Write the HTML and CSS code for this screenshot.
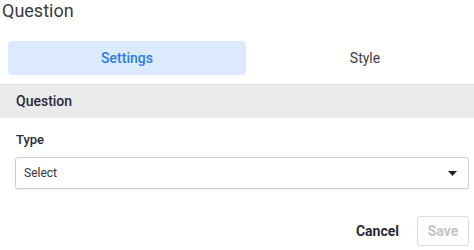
FILE: index.html
```html
<!DOCTYPE html>
<html lang="en">
<head>
    <meta charset="UTF-8">
    <meta name="viewport" content="width=device-width, initial-scale=1.0">
    <title>Question</title>
    <link rel="stylesheet" href="styles.css">
</head>
<body>
    <div class="panel">
        <h1 class="panel-title">Question</h1>
        <div class="tabs">
            <button class="tab active">Settings</button>
            <button class="tab">Style</button>
        </div>
        <div class="section-header">Question</div>
        <div class="form-body">
            <div class="form-group">
                <label for="type">Type</label>
                <div class="select-wrap">
                    <select id="type">
                        <option>Select</option>
                    </select>
                    <svg class="caret" width="9" height="5" viewBox="0 0 9 5"><path d="M0 0h9L4.5 5z" fill="#222"/></svg>
                </div>
            </div>
            <div class="actions">
                <button class="btn btn-cancel">Cancel</button>
                <button class="btn btn-save" disabled>Save</button>
            </div>
        </div>
    </div>
</body>
</html>
```

FILE: styles.css
```css
body {
    margin: 0;
    font-family: Roboto, "Liberation Sans", Arial, sans-serif;
    background-color: #fff;
    color: #2c2c3a;
}
.panel {
    width: 474px;
    height: 250px;
    overflow: hidden;
}
.panel-title {
    margin: 0;
    padding-left: 2px;
    font-size: 18px;
    line-height: 21px;
    font-weight: 400;
    color: #3a3a44;
}
.tabs {
    display: grid;
    grid-template-columns: 238px 238px;
    margin: 20px 0 0 8px;
}
.tab {
    height: 34px;
    border: none;
    background: none;
    font-family: inherit;
    font-size: 14px;
    color: #3d3d48;
    border-radius: 4px;
    cursor: pointer;
}
.tab.active {
    background-color: #dbeafd;
    color: #2b7de3;
    font-weight: 500;
}
.section-header {
    margin-top: 9px;
    height: 33px;
    line-height: 33px;
    padding-left: 16px;
    background-color: #ebebeb;
    border-top: 1px solid #dcdcdc;
    font-size: 14px;
    font-weight: 500;
    color: #2a2a38;
}
.form-body {
    padding: 14px 5px 0 15px;
}
.form-group label {
    display: block;
    padding-left: 1px;
    font-size: 13px;
    line-height: 16px;
    font-weight: 500;
    color: #2a2a38;
}
.select-wrap {
    position: relative;
    margin-top: 9px;
}
.select-wrap select {
    display: block;
    width: 100%;
    height: 32px;
    padding: 0 8px;
    border: 1px solid #cfcfcf;
    border-radius: 3px;
    background: #fff;
    box-shadow: 0 1px 2px rgba(0, 0, 0, 0.08);
    font-family: inherit;
    font-size: 12px;
    color: #333;
    appearance: none;
}
.caret {
    position: absolute;
    right: 12px;
    top: 14px;
}
.actions {
    display: flex;
    justify-content: flex-end;
    align-items: center;
    gap: 18px;
    margin-top: 27px;
}
.btn {
    font-family: inherit;
    font-size: 14px;
    font-weight: 700;
    background: none;
    cursor: pointer;
}
.btn-cancel {
    border: none;
    padding: 0;
    color: #2a2a38;
}
.btn-save {
    width: 52px;
    height: 30px;
    border: 1px solid #dedede;
    border-radius: 3px;
    color: #c4c4c4;
}
.btn-save:disabled {
    cursor: not-allowed;
}
```
